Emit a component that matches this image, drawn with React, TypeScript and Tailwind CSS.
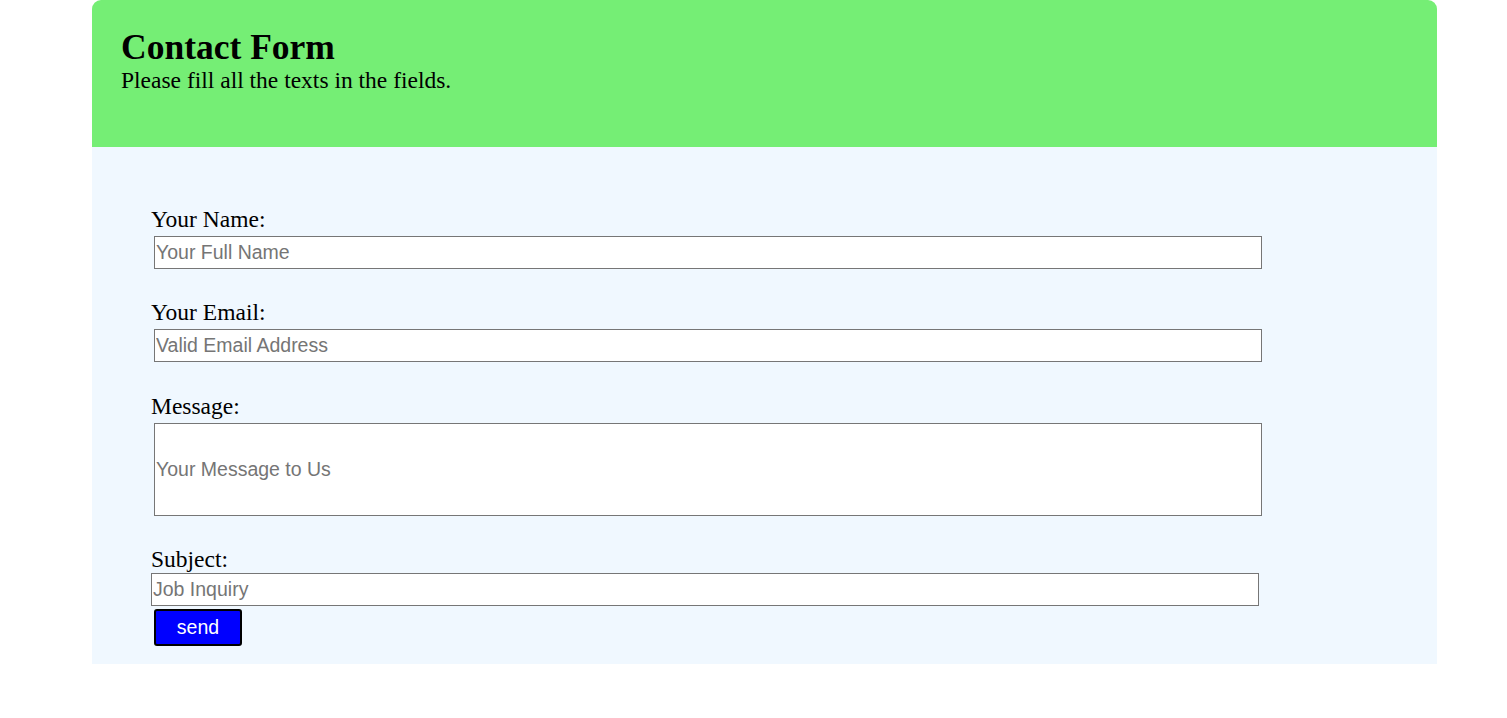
import React from "react";

const inputCls =
  "block w-[1108px] border border-[#767676] bg-white px-[1px] text-[19.5px] text-black placeholder:text-[#757575] outline-none [font-family:'Liberation_Sans',Arial,sans-serif]";

export default function App() {
  return (
    <div className="min-h-[718px] bg-white [font-family:'Liberation_Serif','Times_New_Roman',serif]">
      <div className="ml-[92px] w-[1345px]">
        <div className="h-[147px] rounded-t-[9px] bg-[#75ee75] pl-[29px] pt-[27px] text-black">
          <h1 className="m-0 text-[35.5px] font-bold leading-[40px]">Contact Form</h1>
          <p className="m-0 text-[23.5px] leading-[27px]">Please fill all the texts in the fields.</p>
        </div>
        <form
          className="bg-[#f0f8ff] pb-[18px] pl-[59px] pt-[59px] text-black"
          onSubmit={(e) => e.preventDefault()}
        >
          <label className="block text-[23.5px] leading-[26px]">Your Name:</label>
          <input className={`${inputCls} ml-[3px] mt-[4px] h-[33px]`} placeholder="Your Full Name" />

          <label className="mt-[30px] block text-[23.5px] leading-[26px]">Your Email:</label>
          <input className={`${inputCls} ml-[3px] mt-[4px] h-[33px]`} placeholder="Valid Email Address" />

          <label className="mt-[31px] block text-[23.5px] leading-[26px]">Message:</label>
          <input className={`${inputCls} ml-[3px] mt-[4px] h-[93px]`} placeholder="Your Message to Us" />

          <label className="mt-[30px] block text-[23.5px] leading-[26px]">Subject:</label>
          <input className={`${inputCls} mt-[1px] h-[33px]`} placeholder="Job Inquiry" />

          <button
            type="submit"
            className="ml-[3px] mt-[3px] block h-[37px] w-[88px] rounded-[3px] border-2 border-black bg-[#0000ff] text-[19.5px] text-white [font-family:'Liberation_Sans',Arial,sans-serif]"
          >
            send
          </button>
        </form>
      </div>
    </div>
  );
}
